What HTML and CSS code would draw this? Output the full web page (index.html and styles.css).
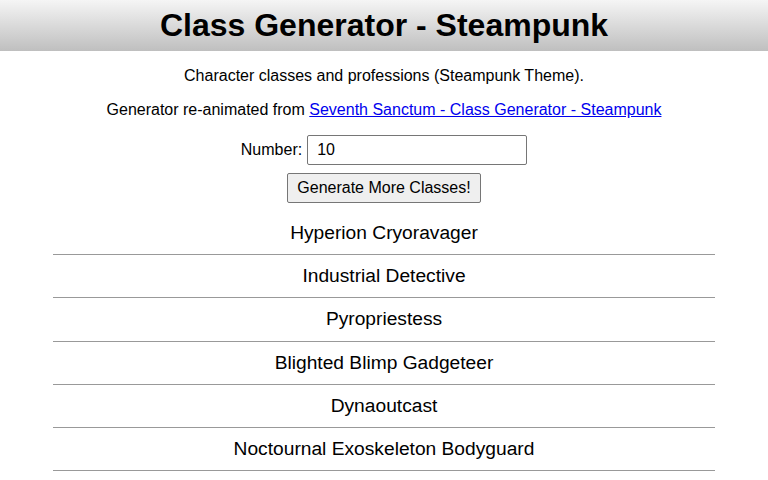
FILE: index.html
```html
<!DOCTYPE html>
<html lang="en">
<head>
    <meta charset="UTF-8">
    <meta name="viewport" content="width=device-width, initial-scale=1.0">
    <title>Class Generator - Steampunk</title>
    <link rel="stylesheet" href="styles.css">
</head>
<body>

<header class="top-bar">
    <h1>Class Generator - Steampunk</h1>
</header>

<div class="content">
    <p>Character classes and professions (Steampunk Theme).</p>
    <p>Generator re-animated from <a href="#">Seventh Sanctum - Class Generator - Steampunk</a></p>

    <div class="form-row">
        <label for="number">Number:</label>
        <input type="text" id="number" value="10">
    </div>
    <div class="form-row form-row-last">
        <button>Generate More Classes!</button>
    </div>

    <ul class="results">
        <li>Hyperion Cryoravager</li>
        <li>Industrial Detective</li>
        <li>Pyropriestess</li>
        <li>Blighted Blimp Gadgeteer</li>
        <li>Dynaoutcast</li>
        <li>Noctournal Exoskeleton Bodyguard</li>
        <li>Steam Chronomancer</li>
        <li>Clockwork Aeronaut</li>
        <li>Brass Alchemist</li>
        <li>Gearbound Inventor</li>
    </ul>
</div>

</body>
</html>
```

FILE: styles.css
```css
body {
    font-family: "Liberation Sans", Arial, sans-serif;
    margin: 0;
    padding: 0;
    background-color: #fff;
    color: #000;
}
.top-bar {
    background: linear-gradient(to bottom, #f5f5f5, #bfbfbf);
    text-align: center;
    height: 51px;
}
.top-bar h1 {
    margin: 0;
    font-size: 32px;
    line-height: 51px;
}
.content {
    margin: 0 8px;
    text-align: center;
    font-size: 16px;
}
.content p {
    margin: 16px 0;
}
.content a {
    color: #0000ee;
}
.form-row {
    display: flex;
    justify-content: center;
    align-items: center;
    gap: 5px;
    margin-bottom: 8px;
}
.form-row-last {
    margin-bottom: 9px;
}
.form-row input {
    width: 220px;
    height: 30px;
    box-sizing: border-box;
    padding: 0 9px;
    border: 1px solid #767676;
    border-radius: 2px;
    font-family: inherit;
    font-size: 16px;
}
.form-row button {
    height: 30px;
    padding: 0 9px;
    font-family: inherit;
    font-size: 16px;
    background-color: #efefef;
    border: 1px solid #767676;
    border-radius: 2px;
    color: #000;
}
.results {
    list-style: none;
    width: 88%;
    margin: 0 auto;
    padding: 0;
}
.results li {
    padding: 10px 0;
    border-bottom: 1px solid #999;
    font-size: 19.2px;
    line-height: 22.2px;
}
```
